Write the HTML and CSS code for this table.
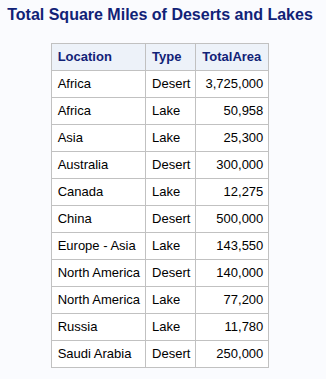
FILE: index.html
```html
<!DOCTYPE html>
<html>
<head>
<meta charset="utf-8">
<link rel="stylesheet" href="styles.css">
</head>
<body>
<div class="title">Total Square Miles of Deserts and Lakes</div>
<div class="wrap">
<table class="report">
<thead>
<tr><th class="c1">Location</th><th class="c2">Type</th><th class="c3">TotalArea</th></tr>
</thead>
<tbody>
<tr><td>Africa</td><td>Desert</td><td class="num">3,725,000</td></tr>
<tr><td>Africa</td><td>Lake</td><td class="num">50,958</td></tr>
<tr><td>Asia</td><td>Lake</td><td class="num">25,300</td></tr>
<tr><td>Australia</td><td>Desert</td><td class="num">300,000</td></tr>
<tr><td>Canada</td><td>Lake</td><td class="num">12,275</td></tr>
<tr><td>China</td><td>Desert</td><td class="num">500,000</td></tr>
<tr><td>Europe - Asia</td><td>Lake</td><td class="num">143,550</td></tr>
<tr><td>North America</td><td>Desert</td><td class="num">140,000</td></tr>
<tr><td>North America</td><td>Lake</td><td class="num">77,200</td></tr>
<tr><td>Russia</td><td>Lake</td><td class="num">11,780</td></tr>
<tr><td>Saudi Arabia</td><td>Desert</td><td class="num">250,000</td></tr>
</tbody>
</table>
</div>
</body>
</html>
```
FILE: styles.css
```css
html, body {
  margin: 0;
  padding: 0;
  background: #fafbfe;
}
body {
  font-family: Arial, "Liberation Sans", Helvetica, sans-serif;
  color: #000;
}
.title {
  text-align: center;
  color: #112277;
  font-weight: bold;
  font-size: 16px;
  line-height: 18px;
  padding-top: 6px;
  padding-right: 6px;
}
.wrap {
  display: flex;
  justify-content: center;
  padding-top: 19px;
  padding-right: 6px;
}
.report {
  border-collapse: collapse;
  table-layout: fixed;
  border: 1px solid #c1c1c1;
  font-size: 13px;
  line-height: 16px;
}
.report th, .report td {
  border: 1px solid #c1c1c1;
  padding: 5px 5px 5px 6px;
  text-align: left;
  white-space: nowrap;
  background: #fff;
}
.report th {
  background: #edf2f9;
  color: #112277;
  font-weight: bold;
}
.report .c1 { width: 82px; }
.report .c2 { width: 37px; }
.report .c3 { width: 61px; }
.report td.num {
  text-align: right;
  padding-right: 5px;
}
```
